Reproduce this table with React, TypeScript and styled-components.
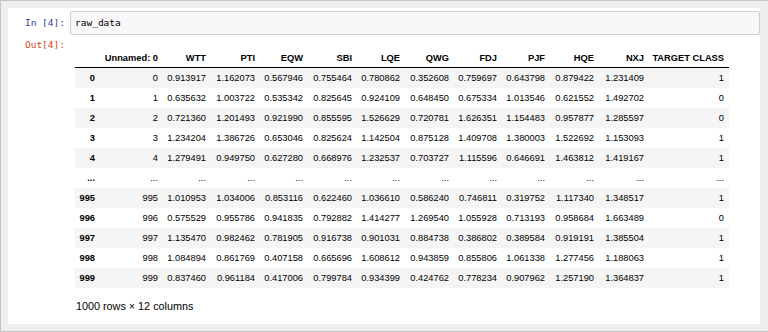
import React from "react";
import styled, { createGlobalStyle } from "styled-components";

const GlobalStyle = createGlobalStyle`
  html, body {
    margin: 0;
    padding: 0;
    background: #eeeeee;
  }
`;

const Frame = styled.div`
  box-sizing: border-box;
  width: 768px;
  height: 332px;
  background: #eeeeee;
  border-top: 1px solid #c4c4c4;
  border-left: 1px solid #c4c4c4;
  border-bottom: 1px solid #c4c4c4;
  padding: 7px 8px 7px 7px;
`;

const Notebook = styled.div`
  height: 100%;
  background: #ffffff;
  padding-top: 3px;
  box-sizing: border-box;
`;

const CellRow = styled.div`
  display: flex;
  align-items: flex-start;
`;

const Prompt = styled.div<{ $kind: "in" | "out" }>`
  flex: 0 0 62px;
  box-sizing: border-box;
  padding-right: 5px;
  text-align: right;
  font-family: "DejaVu Sans Mono", "Liberation Mono", monospace;
  font-size: 9.5px;
  line-height: 12px;
  padding-top: ${(p) => (p.$kind === "in" ? "6px" : "4px")};
  color: ${(p) => (p.$kind === "in" ? "#303f9f" : "#d84315")};
`;

const InputBox = styled.div`
  flex: 1;
  height: 24px;
  box-sizing: border-box;
  background: #f7f7f7;
  border: 1px solid #cfcfcf;
  border-radius: 2px;
  padding: 5px 4px;
  font-family: "DejaVu Sans Mono", "Liberation Mono", monospace;
  font-size: 9.5px;
  line-height: 12px;
  color: #000;
`;

const Output = styled.div`
  flex: 1;
  padding: 13px 0 0 5px;
  font-family: "Liberation Sans", Arial, sans-serif;
  color: #000;
`;

const Table = styled.table`
  border-collapse: collapse;
  table-layout: fixed;
  width: 654px;
  font-size: 9.3px;
`;

const HeadCell = styled.th`
  height: 19px;
  padding: 0 5px 0 0;
  text-align: right;
  font-weight: bold;
  white-space: nowrap;
  border-bottom: 1px solid #000;
`;

const Row = styled.tr<{ $striped: boolean }>`
  background: ${(p) => (p.$striped ? "#f5f5f5" : "#ffffff")};
`;

const IndexCell = styled.th`
  height: 20px;
  padding: 0 5px 0 0;
  text-align: right;
  font-weight: bold;
  white-space: nowrap;
`;

const Cell = styled.td`
  height: 20px;
  padding: 0 5px 0 0;
  text-align: right;
  white-space: nowrap;
`;

const Shape = styled.p`
  margin: 12px 0 0 1px;
  font-size: 10.8px;
  line-height: 12px;
`;

const columns = ["Unnamed: 0", "WTT", "PTI", "EQW", "SBI", "LQE", "QWG", "FDJ", "PJF", "HQE", "NXJ", "TARGET CLASS"];
const widths = [25, 63, 48, 49, 48, 49, 48, 49, 48, 48, 49, 50, 80];

const rows: string[][] = [
  ["0", "0", "0.913917", "1.162073", "0.567946", "0.755464", "0.780862", "0.352608", "0.759697", "0.643798", "0.879422", "1.231409", "1"],
  ["1", "1", "0.635632", "1.003722", "0.535342", "0.825645", "0.924109", "0.648450", "0.675334", "1.013546", "0.621552", "1.492702", "0"],
  ["2", "2", "0.721360", "1.201493", "0.921990", "0.855595", "1.526629", "0.720781", "1.626351", "1.154483", "0.957877", "1.285597", "0"],
  ["3", "3", "1.234204", "1.386726", "0.653046", "0.825624", "1.142504", "0.875128", "1.409708", "1.380003", "1.522692", "1.153093", "1"],
  ["4", "4", "1.279491", "0.949750", "0.627280", "0.668976", "1.232537", "0.703727", "1.115596", "0.646691", "1.463812", "1.419167", "1"],
  ["...", "...", "...", "...", "...", "...", "...", "...", "...", "...", "...", "...", "..."],
  ["995", "995", "1.010953", "1.034006", "0.853116", "0.622460", "1.036610", "0.586240", "0.746811", "0.319752", "1.117340", "1.348517", "1"],
  ["996", "996", "0.575529", "0.955786", "0.941835", "0.792882", "1.414277", "1.269540", "1.055928", "0.713193", "0.958684", "1.663489", "0"],
  ["997", "997", "1.135470", "0.982462", "0.781905", "0.916738", "0.901031", "0.884738", "0.386802", "0.389584", "0.919191", "1.385504", "1"],
  ["998", "998", "1.084894", "0.861769", "0.407158", "0.665696", "1.608612", "0.943859", "0.855806", "1.061338", "1.277456", "1.188063", "1"],
  ["999", "999", "0.837460", "0.961184", "0.417006", "0.799784", "0.934399", "0.424762", "0.778234", "0.907962", "1.257190", "1.364837", "1"],
];

const App = () => {
  return (
    <>
      <GlobalStyle />
      <Frame>
        <Notebook>
          <CellRow>
            <Prompt $kind="in">In [4]:</Prompt>
            <InputBox>raw_data</InputBox>
          </CellRow>
          <CellRow>
            <Prompt $kind="out">Out[4]:</Prompt>
            <Output>
              <Table>
                <colgroup>
                  {widths.map((w, i) => (
                    <col key={i} style={{ width: w }} />
                  ))}
                </colgroup>
                <thead>
                  <tr>
                    <HeadCell />
                    {columns.map((c) => (
                      <HeadCell key={c}>{c}</HeadCell>
                    ))}
                  </tr>
                </thead>
                <tbody>
                  {rows.map((r, i) => (
                    <Row key={i} $striped={i % 2 === 0}>
                      <IndexCell>{r[0]}</IndexCell>
                      {r.slice(1).map((v, j) => (
                        <Cell key={j}>{v}</Cell>
                      ))}
                    </Row>
                  ))}
                </tbody>
              </Table>
              <Shape>1000 rows × 12 columns</Shape>
            </Output>
          </CellRow>
        </Notebook>
      </Frame>
    </>
  );
};

export default App;
